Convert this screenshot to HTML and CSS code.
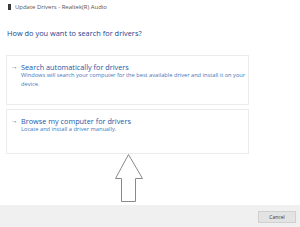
FILE: index.html
```html
<!DOCTYPE html>
<html>
<head>
<meta charset="utf-8">
<link rel="stylesheet" href="styles.css">
</head>
<body>
<div class="window">
  <div class="titlebar">
    <span class="title-icon"></span>
    <span class="title-text">Update Drivers - Realtek(R) Audio</span>
  </div>
  <div class="main">
    <h1 class="heading">How do you want to search for drivers?</h1>
    <div class="card card-auto">
      <div class="card-title"><span class="card-arrow">→</span><span>Search automatically for drivers</span></div>
      <div class="card-desc">Windows will search your computer for the best available driver and install it on your device.</div>
    </div>
    <div class="card card-browse">
      <div class="card-title"><span class="card-arrow">→</span><span>Browse my computer for drivers</span></div>
      <div class="card-desc">Locate and install a driver manually.</div>
    </div>
    <div class="pointer">
      <svg width="30" height="48" viewBox="0 0 30 48">
        <polygon points="14.5,0.5 1.5,24.5 7.5,24.5 7.5,47.5 21.5,47.5 21.5,24.5 28.5,24.5" fill="#ffffff" stroke="#8a8a8a" stroke-width="1"/>
      </svg>
    </div>
  </div>
  <div class="footer">
    <button class="btn-cancel">Cancel</button>
  </div>
</div>
</body>
</html>
```

FILE: styles.css
```css
html, body {
  margin: 0;
  padding: 0;
  background: #ffffff;
}
.window {
  width: 300px;
  height: 227px;
  display: flex;
  flex-direction: column;
  font-family: "Open Sans", "Noto Sans", sans-serif;
  overflow: hidden;
}
.titlebar {
  height: 14px;
  display: flex;
  align-items: center;
  padding-left: 8px;
  gap: 4px;
}
.title-icon {
  width: 3px;
  height: 6px;
  background: #3a3a3a;
}
.title-text {
  font-size: 5.95px;
  color: #555555;
}
.main {
  flex: 1;
  padding: 0 51px 0 6px;
  display: flex;
  flex-direction: column;
}
.heading {
  margin: 14px 0 0 1px;
  font-size: 7.4px;
  line-height: 10px;
  font-weight: normal;
  color: #1d3f8f;
}
.card {
  border: 1px solid #ececec;
  padding: 7px 1px 0 4px;
  box-sizing: border-box;
}
.card-auto {
  margin-top: 17px;
  height: 50px;
}
.card-browse {
  margin-top: 4px;
  height: 45px;
}
.card-title {
  display: flex;
  align-items: center;
  font-size: 7.3px;
  line-height: 8px;
  color: #2357a8;
}
.card-arrow {
  width: 10px;
  font-size: 6.5px;
  color: #2357a8;
}
.card-desc {
  margin-left: 10px;
  font-size: 5.7px;
  line-height: 8.5px;
  color: #3f78bd;
}
.pointer {
  padding-left: 108px;
  line-height: 0;
}
.footer {
  height: 22px;
  background: #f0f0f0;
  display: flex;
  align-items: center;
  justify-content: flex-end;
  padding-right: 4px;
}
.btn-cancel {
  width: 38px;
  height: 12px;
  margin-top: 2px;
  padding: 0;
  background: #e3e3e3;
  border: 1px solid #d0d0d0;
  font-family: "Open Sans", "Noto Sans", sans-serif;
  font-size: 5px;
  color: #333333;
}
```
